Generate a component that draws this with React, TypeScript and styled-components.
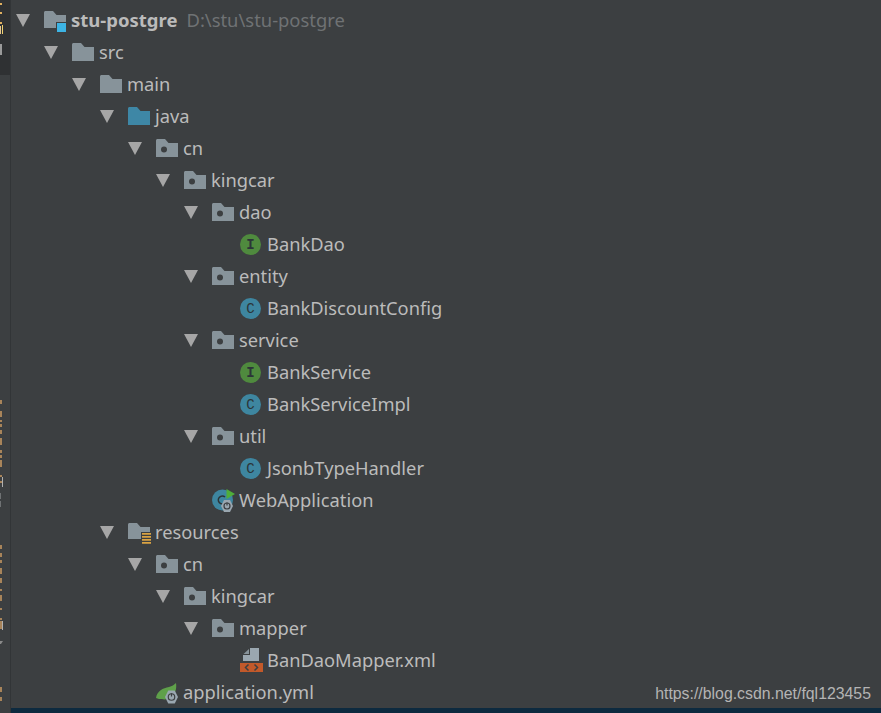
import type { JSX } from 'react';
import styled, { createGlobalStyle } from 'styled-components';

const GlobalStyle = createGlobalStyle`
  html, body {
    margin: 0;
    height: 100%;
    overflow: hidden;
    background: #3c3f41;
  }
`;

const Window = styled.div`
  position: relative;
  display: flex;
  width: 881px;
  height: 713px;
  overflow: hidden;
  font-family: 'Noto Sans', sans-serif;
`;

const ToolStrip = styled.aside`
  flex: none;
  width: 10px;
  border-right: 1px solid #323537;
  background: #3c3f41;
`;

const StripMarks = styled.svg`
  display: block;
`;

const Main = styled.main`
  display: flex;
  flex-direction: column;
  flex: 1;
  min-width: 0;
`;

const Tree = styled.ul`
  flex: 1;
  margin: 0;
  padding: 4px 0 0 5px;
  list-style: none;
`;

const Row = styled.li<{ $depth: number }>`
  display: flex;
  align-items: center;
  height: 32px;
  padding-left: ${(p) => p.$depth * 28}px;
`;

const ArrowSlot = styled.span`
  display: flex;
  flex: none;
  align-items: center;
  width: 28px;
  height: 32px;
`;

const Arrow = styled.span`
  width: 0;
  height: 0;
  border-left: 7px solid transparent;
  border-right: 7px solid transparent;
  border-top: 13px solid #a6a6a6;
`;

const IconSlot = styled.span`
  display: flex;
  flex: none;
  align-items: center;
  width: 27px;
  height: 32px;
`;

const Label = styled.span<{ $bold?: boolean }>`
  color: #bbbbbb;
  font-size: ${(p) => (p.$bold ? 18.5 : 18.3)}px;
  font-weight: ${(p) => (p.$bold ? 700 : 400)};
  line-height: 32px;
  white-space: nowrap;
`;

const PathHint = styled.span`
  margin-left: 9px;
  color: #6f7274;
  font-size: 18.4px;
  line-height: 32px;
  white-space: nowrap;
`;

const BottomBar = styled.div`
  flex: none;
  height: 5px;
  background: #0d2a3f;
`;

const Watermark = styled.span`
  position: absolute;
  right: 10px;
  bottom: 9px;
  color: #b4b4b4;
  font-family: 'Liberation Sans', Arial, sans-serif;
  font-size: 15.85px;
  line-height: 20px;
`;

const FOLDER = 'M0 1.5C0 .7.7 0 1.5 0H9l3.5 4H22v14H0Z';

const Folder = ({ fill = '#87939a', dot }: { fill?: string; dot?: boolean }) => (
  <svg width="22" height="18" viewBox="0 0 22 18">
    <path d={FOLDER} fill={fill} />
    {dot && <circle cx="8" cy="10.5" r="3" fill="#3c3f41" />}
  </svg>
);

const Module = () => (
  <svg width="24" height="24" viewBox="0 0 24 24">
    <path d="M0 4.5C0 3.7.7 3 1.5 3H9l3.5 4H22v13H0Z" fill="#87939a" />
    <rect x="12" y="14" width="11" height="10" fill="#3c3f41" />
    <rect x="13" y="15" width="9" height="9" fill="#3db4e4" />
  </svg>
);

const Resources = () => (
  <svg width="24" height="24" viewBox="0 0 24 24">
    <path d="M0 4.5C0 3.7.7 3 1.5 3H9l3.5 4H22v5H13v7H0Z" fill="#87939a" />
    <path d="M14 13h9v1.7h-9zM14 16h9v1.7h-9zM14 19h9v1.7h-9zM14 22h9v1.7h-9z" fill="#d9a343" />
  </svg>
);

const Badge = ({ kind }: { kind: 'I' | 'C' }) => (
  <svg width="21" height="21" viewBox="0 0 21 21">
    <circle cx="10.5" cy="10.5" r="10.5" fill={kind === 'I' ? '#4f8a3e' : '#3e86a0'} />
    <text
      x="10.5"
      y="15"
      textAnchor="middle"
      fill="#2c3538"
      fontFamily="Liberation Mono, monospace"
      fontSize="14"
      fontWeight={kind === 'I' ? 700 : 400}
    >
      {kind}
    </text>
  </svg>
);

const Gear = ({ cx, cy, r = 6 }: { cx: number; cy: number; r?: number }) => (
  <g>
    <polygon
      points={`${cx - r / 2},${cy - r} ${cx + r / 2},${cy - r} ${cx + r},${cy} ${cx + r / 2},${cy + r} ${cx - r / 2},${cy + r} ${cx - r},${cy}`}
      fill="#9aa7b0"
    />
    <circle cx={cx} cy={cy} r={r / 2} fill="none" stroke="#3c3f41" strokeWidth="1.2" />
    <path d={`M${cx} ${cy - r / 2 - 0.5}v${r / 2}`} stroke="#3c3f41" strokeWidth="1.2" />
  </g>
);

const SpringClass = () => (
  <svg width="24" height="26" viewBox="0 0 24 26">
    <circle cx="10.5" cy="13" r="10.5" fill="#3e86a0" />
    <path d="M13 10a4 4 0 1 0 0 6" fill="none" stroke="#2c3538" strokeWidth="1.6" />
    <polygon points="14.5,2 23,7 14.5,12" fill="#4fae3a" />
    <Gear cx={15} cy={19} />
  </svg>
);

const XmlFile = () => (
  <svg width="24" height="24" viewBox="0 0 24 24">
    <path d="M10 0h9v13H3V7h7Z" fill="#9aa7b0" />
    <path d="M9 1v5H3.5Z" fill="#87939a" />
    <rect x="0" y="15" width="23" height="9" fill="#c2592a" />
    <path d="M8.5 16.5 5.5 19.5l3 3M14.5 16.5l3 3-3 3" fill="none" stroke="#3c3f41" strokeWidth="1.5" />
  </svg>
);

const SpringYml = () => (
  <svg width="24" height="24" viewBox="0 0 24 24">
    <path d="M0 18C1 11 7 8 13 7c3-1 5-2 7-4 1 6-1 11-4 13-4 3-7 4-10 3-2 0-4 0-6-1Z" fill="#5fa04a" />
    <Gear cx={15.5} cy={17} r={6.5} />
  </svg>
);

type IconName = 'folder' | 'source' | 'package' | 'module' | 'resources' | 'I' | 'C' | 'spring' | 'xml' | 'yml';

const icons: Record<IconName, JSX.Element> = {
  folder: <Folder />,
  source: <Folder fill="#3e87a6" />,
  package: <Folder dot />,
  module: <Module />,
  resources: <Resources />,
  I: <Badge kind="I" />,
  C: <Badge kind="C" />,
  spring: <SpringClass />,
  xml: <XmlFile />,
  yml: <SpringYml />,
};

type Node = {
  name: string;
  depth: number;
  icon: IconName;
  open?: boolean;
};

const nodes: Node[] = [
  { name: 'src', depth: 1, icon: 'folder', open: true },
  { name: 'main', depth: 2, icon: 'folder', open: true },
  { name: 'java', depth: 3, icon: 'source', open: true },
  { name: 'cn', depth: 4, icon: 'package', open: true },
  { name: 'kingcar', depth: 5, icon: 'package', open: true },
  { name: 'dao', depth: 6, icon: 'package', open: true },
  { name: 'BankDao', depth: 7, icon: 'I' },
  { name: 'entity', depth: 6, icon: 'package', open: true },
  { name: 'BankDiscountConfig', depth: 7, icon: 'C' },
  { name: 'service', depth: 6, icon: 'package', open: true },
  { name: 'BankService', depth: 7, icon: 'I' },
  { name: 'BankServiceImpl', depth: 7, icon: 'C' },
  { name: 'util', depth: 6, icon: 'package', open: true },
  { name: 'JsonbTypeHandler', depth: 7, icon: 'C' },
  { name: 'WebApplication', depth: 6, icon: 'spring' },
  { name: 'resources', depth: 3, icon: 'resources', open: true },
  { name: 'cn', depth: 4, icon: 'package', open: true },
  { name: 'kingcar', depth: 5, icon: 'package', open: true },
  { name: 'mapper', depth: 6, icon: 'package', open: true },
  { name: 'BanDaoMapper.xml', depth: 7, icon: 'xml' },
  { name: 'application.yml', depth: 4, icon: 'yml' },
];

// ends of the rotated tool window captions that stick out of the cropped strip: [y, height]
const stripTicks = [
  [400, 4], [411, 2], [413, 4], [420, 2], [424, 3], [430, 4], [438, 7], [450, 3], [455, 3], [460, 7], [475, 2],
  [481, 2], [545, 4], [553, 4], [560, 3], [568, 6], [578, 5], [589, 2], [595, 6], [608, 2], [618, 2], [621, 8],
  [687, 5], [697, 4],
];

const App = () => (
  <Window>
    <GlobalStyle />
    <ToolStrip>
      <StripMarks width="10" height="713" viewBox="0 0 10 713">
        <rect x="0" y="0" width="10" height="75" fill="#2f3133" />
        <rect x="0" y="3" width="2" height="2" fill="#e0b060" />
        <rect x="0" y="12" width="2" height="2" fill="#e0b060" />
        <rect x="0" y="22" width="2" height="2" fill="#e0b060" />
        <rect x="0" y="26" width="1" height="8" fill="#e6c890" />
        <rect x="2" y="25" width="1" height="9" fill="#f0d070" />
        <rect x="0" y="44" width="2" height="11" fill="#9a9a9a" />
        {stripTicks.map(([y, h]) => (
          <rect key={y} x="0" y={y} width="2" height={h} fill="#a8845a" />
        ))}
        <rect x="2" y="477" width="1" height="10" fill="#b0b0b0" />
        <rect x="2" y="621" width="1" height="9" fill="#b0b0b0" />
        <rect x="0" y="493" width="1" height="6" fill="#6f7274" />
        <rect x="0" y="501" width="1" height="6" fill="#6f7274" />
        <path d="M0 641h3l-2 3H0Z" fill="#8a8a8a" />
      </StripMarks>
    </ToolStrip>
    <Main>
      <Tree>
        <Row $depth={0}>
          <ArrowSlot>
            <Arrow />
          </ArrowSlot>
          <IconSlot>{icons.module}</IconSlot>
          <Label $bold>stu-postgre</Label>
          <PathHint>D:\stu\stu-postgre</PathHint>
        </Row>
        {nodes.map((node, i) => (
          <Row key={i} $depth={node.depth}>
            <ArrowSlot>{node.open && <Arrow />}</ArrowSlot>
            <IconSlot>{icons[node.icon]}</IconSlot>
            <Label>{node.name}</Label>
          </Row>
        ))}
      </Tree>
      <BottomBar />
    </Main>
    <Watermark>https://blog.csdn.net/fql123455</Watermark>
  </Window>
);

export default App;
